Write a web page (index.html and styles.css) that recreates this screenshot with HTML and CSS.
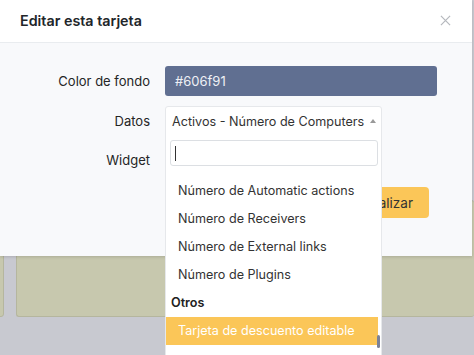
FILE: index.html
```html
<!DOCTYPE html>
<html lang="es">
  <head>
    <meta charset="UTF-8" />
    <meta name="viewport" content="width=device-width, initial-scale=1.0" />
    <title>Editar esta tarjeta</title>
    <link rel="stylesheet" href="styles.css">
  </head>
  <body>
    <div class="page">
      <div class="page-top"></div>
      <div class="page-cards">
        <div class="page-card page-card-left"></div>
        <div class="page-card page-card-main"></div>
      </div>
    </div>

    <div class="modal">
      <div class="modal-header">
        <span class="modal-title">Editar esta tarjeta</span>
        <svg class="modal-close" width="12" height="12" viewBox="0 0 12 12">
          <path d="M1 1 L11 11 M11 1 L1 11" stroke="#b5b8bd" stroke-width="1.3" fill="none" />
        </svg>
      </div>
      <div class="modal-body">
        <div class="form-row">
          <label class="form-label">Color de fondo</label>
          <div class="color-input">#606f91</div>
        </div>
        <div class="form-row">
          <label class="form-label">Datos</label>
          <div class="select">
            <span>Activos - Número de Computers</span>
            <span class="select-caret"></span>
          </div>
        </div>
        <div class="form-row">
          <label class="form-label">Widget</label>
        </div>
        <div class="form-actions">
          <button class="btn-save">Actualizar</button>
        </div>

        <div class="dropdown">
          <div class="dropdown-search"><span class="cursor"></span></div>
          <ul class="dropdown-list">
            <li class="option">Número de Automatic actions</li>
            <li class="option">Número de Receivers</li>
            <li class="option">Número de External links</li>
            <li class="option">Número de Plugins</li>
            <li class="group">Otros</li>
            <li class="option option-active">Tarjeta de descuento editable</li>
          </ul>
          <div class="scroll-thumb"></div>
        </div>
      </div>
    </div>
  </body>
</html>
```

FILE: styles.css
```css
body {
  margin: 0;
  font-family: Inter, "Noto Sans", sans-serif;
  background-color: #c8c9d0;
  width: 474px;
  height: 355px;
  overflow: hidden;
  position: relative;
}
.page-top {
  height: 200px;
}
.page-cards {
  display: flex;
  gap: 12px;
  margin-left: -12px;
}
.page-card {
  height: 115px;
  background-color: #c7c8ae;
  border: 1px solid #b5b69e;
  border-radius: 3px;
}
.page-card-left {
  width: 14px;
}
.page-card-main {
  flex: 1;
  border-right: none;
}
.modal {
  position: absolute;
  left: 0;
  top: 0;
  width: 472px;
  box-shadow: 0 1px 3px rgba(0, 0, 0, 0.15);
}
.modal-header {
  height: 43px;
  box-sizing: border-box;
  background-color: #fff;
  border-bottom: 1px solid #e9ecef;
  display: flex;
  align-items: center;
  justify-content: space-between;
  padding: 0 20px 2px 20px;
}
.modal-title {
  font-size: 14.3px;
  font-weight: 600;
  color: #212529;
}
.modal-close {
  width: 11px;
  height: 11px;
  margin-right: 1px;
}
.modal-body {
  position: relative;
  background-color: #f8f9fb;
  height: 213px;
  box-sizing: border-box;
  padding-top: 23px;
}
.form-row {
  display: flex;
  align-items: center;
  gap: 15px;
  margin-bottom: 9px;
  min-height: 30px;
}
.form-label {
  width: 150px;
  text-align: right;
  font-size: 13px;
  color: #252525;
}
.color-input {
  width: 272px;
  height: 30px;
  box-sizing: border-box;
  background-color: #606f91;
  border-radius: 3px;
  color: #eef0f5;
  font-size: 13px;
  padding-left: 10px;
  line-height: 30px;
}
.select {
  width: 217px;
  height: 30px;
  box-sizing: border-box;
  background-color: #fff;
  border: 1px solid #e6e8eb;
  border-radius: 3px 3px 0 0;
  display: flex;
  align-items: center;
  justify-content: space-between;
  padding: 0 5px 0 6px;
  font-size: 12.6px;
  color: #333;
  white-space: nowrap;
  margin-top: 1px;
}
.select-caret {
  width: 0;
  height: 0;
  border-left: 3px solid transparent;
  border-right: 3px solid transparent;
  border-bottom: 4px solid #999;
}
.form-actions {
  display: flex;
  justify-content: flex-end;
  padding-right: 43px;
  margin-top: 12px;
}
.btn-save {
  height: 31px;
  padding: 0 16px;
  background-color: #fbc658;
  border: none;
  border-radius: 4px;
  font-family: inherit;
  font-size: 13.5px;
  color: #333;
}
.dropdown {
  position: absolute;
  left: 165px;
  top: 92px;
  width: 217px;
  height: 230px;
  box-sizing: border-box;
  background-color: #fff;
  border: 1px solid #e6e8eb;
  border-top: none;
  padding: 5px 3px 0 0;
}
.dropdown-search {
  margin-left: 4px;
  height: 26px;
  box-sizing: border-box;
  border: 1px solid #dcdfe3;
  border-radius: 3px;
  display: flex;
  align-items: center;
  padding-left: 4px;
}
.cursor {
  width: 1px;
  height: 15px;
  background-color: #333;
}
.dropdown-list {
  list-style: none;
  margin: 11px 0 0 0;
  padding: 0;
}
.dropdown-list li {
  height: 28px;
  line-height: 28px;
  font-size: 12.6px;
  white-space: nowrap;
}
.option {
  padding-left: 12px;
  color: #333;
}
.group {
  padding-left: 5px;
  font-weight: 600;
  color: #222;
}
.option-active {
  background-color: #fbc658;
  color: #fff;
}
.scroll-thumb {
  position: absolute;
  right: 1px;
  top: 200px;
  width: 3px;
  height: 13px;
  border-radius: 2px;
  background-color: #7a8198;
}
```
